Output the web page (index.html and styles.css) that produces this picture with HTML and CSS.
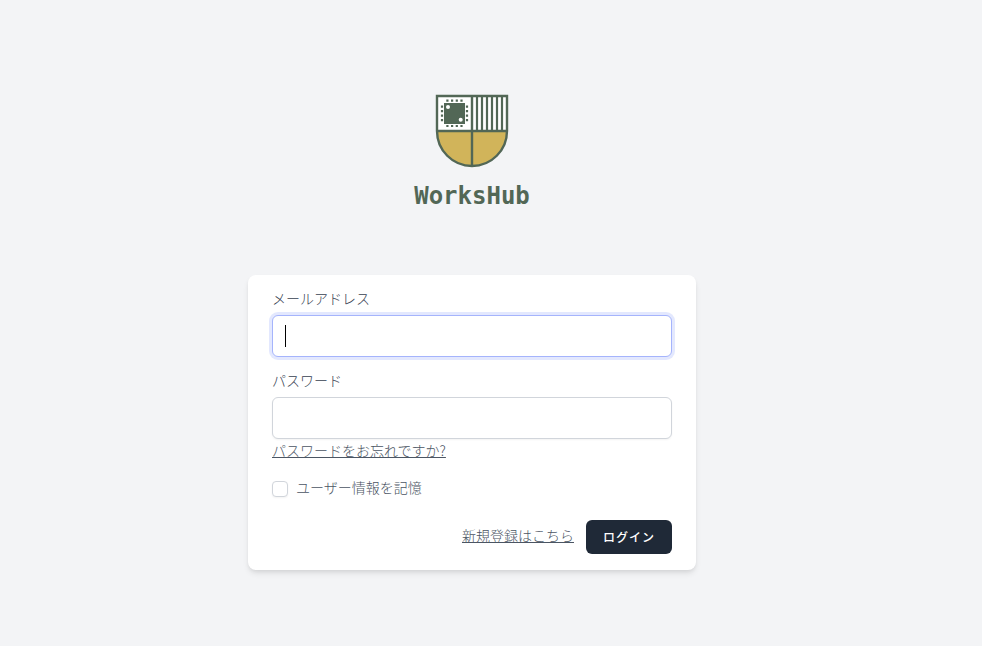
FILE: index.html
```html
<!DOCTYPE html>
<html lang="ja">
<head>
  <meta charset="UTF-8">
  <meta name="viewport" content="width=device-width, initial-scale=1.0">
  <title>WorksHub</title>
  <link rel="stylesheet" href="styles.css">
</head>
<body>
  <main class="page">
    <a class="logo" href="#">
      <svg class="logo-mark" viewBox="0 0 74 74" aria-hidden="true">
        <path d="M2 2H72V37A35 35 0 0 1 2 37Z" fill="#fff"/>
        <path d="M2 37H72A35 35 0 0 1 2 37Z" fill="#d1b45a"/>
        <!-- stripes -->
        <path d="M42 2V37M47 2V37M52 2V37M57 2V37M62 2V37M67 2V37" stroke="#526756" stroke-width="2.2"/>
        <!-- chip -->
        <rect x="9" y="9" width="21" height="21" fill="#526756"/>
        <path d="M11.3 6.7H28M11.3 32H28" stroke="#526756" stroke-width="2.2" stroke-dasharray="2.2 2.5"/>
        <path d="M7 11.6V28M32 11.6V28" stroke="#526756" stroke-width="2.2" stroke-dasharray="2.2 2.3"/>
        <circle cx="13" cy="13" r="2" fill="#fff"/>
        <circle cx="25.7" cy="25.7" r="2" fill="#fff"/>
        <path d="M2 37H72M37 2V72M2 2H72V37A35 35 0 0 1 2 37Z" fill="none" stroke="#526756" stroke-width="2.4"/>
      </svg>
      <span class="logo-text">WorksHub</span>
    </a>

    <form class="card">
      <div class="field">
        <label for="email">メールアドレス</label>
        <input type="email" id="email" class="text-input active" autocomplete="off">
      </div>

      <div class="field">
        <label for="password">パスワード</label>
        <input type="password" id="password" class="text-input">
      </div>
      <a class="link forgot" href="#">パスワードをお忘れですか?</a>

      <div class="remember">
        <input type="checkbox" id="remember">
        <label for="remember">ユーザー情報を記憶</label>
      </div>

      <div class="actions">
        <a class="link" href="#">新規登録はこちら</a>
        <button type="submit">ログイン</button>
      </div>
    </form>
  </main>
</body>
</html>
```

FILE: styles.css
```css
:root {
  --green: #526756;
  --gray-100: #f3f4f6;
  --gray-300: #d1d5db;
  --gray-600: #4b5563;
  --gray-700: #374151;
  --gray-800: #1f2937;
}

* {
  box-sizing: border-box;
}

body {
  margin: 0;
  background-color: var(--gray-100);
  font-family: "Noto Sans CJK JP", sans-serif;
  font-size: 14px;
  font-weight: 300;
  line-height: 14px;
  color: var(--gray-700);
}

.page {
  display: flex;
  flex-direction: column;
  align-items: center;
  min-height: 100vh;
  padding: 94px 38px 76px 0;
}

.logo {
  display: flex;
  flex-direction: column;
  align-items: center;
  gap: 12px;
  color: var(--green);
  text-decoration: none;
}

.logo-mark {
  display: block;
  width: 74px;
  height: 74px;
}

.logo-text {
  font-family: "DejaVu Sans Mono", monospace;
  font-size: 24px;
  font-weight: bold;
  line-height: 32px;
}

.card {
  width: 100%;
  max-width: 448px;
  margin-top: 63px;
  padding: 16px 24px;
  background-color: #fff;
  border-radius: 8px;
  box-shadow: 0 4px 6px -1px rgba(0, 0, 0, 0.1), 0 2px 4px -1px rgba(0, 0, 0, 0.06);
}

.field + .field {
  margin-top: 16px;
}

.field label {
  display: block;
  margin-bottom: 10px;
}

.text-input {
  display: block;
  width: 100%;
  height: 42px;
  padding: 8px 12px;
  font: inherit;
  font-size: 16px;
  background-color: #fff;
  border: 1px solid var(--gray-300);
  border-radius: 6px;
  box-shadow: 0 1px 2px rgba(0, 0, 0, 0.05);
  outline: none;
}

.text-input.active,
.text-input:focus {
  border-color: #a5b4fc;
  box-shadow: 0 0 0 3px rgba(199, 210, 254, 0.5);
}

/* text cursor */
.text-input.active {
  caret-color: transparent;
  background-image: linear-gradient(#000, #000);
  background-repeat: no-repeat;
  background-position: 12px center;
  background-size: 1px 22px;
}

.link {
  color: var(--gray-600);
  text-decoration: underline;
}

.forgot {
  display: block;
  width: fit-content;
  margin-top: 4px;
}

.remember {
  display: flex;
  align-items: center;
  gap: 8px;
  margin-top: 23px;
  color: var(--gray-600);
}

.remember label,
.actions .link {
  padding-bottom: 4px;
}

.remember input {
  appearance: none;
  width: 16px;
  height: 16px;
  margin: 0;
  background-color: #fff;
  border: 1px solid var(--gray-300);
  border-radius: 4px;
  box-shadow: 0 1px 2px rgba(0, 0, 0, 0.05);
}

.remember input:checked {
  background-color: #4f46e5;
}

.actions {
  display: flex;
  align-items: center;
  justify-content: flex-end;
  gap: 12px;
  margin-top: 22px;
}

button {
  padding: 9px 17px;
  font: inherit;
  font-size: 12px;
  font-weight: 500;
  line-height: 16px;
  letter-spacing: 1px;
  color: #fff;
  background-color: var(--gray-800);
  border: none;
  border-radius: 6px;
  cursor: pointer;
}

button:hover {
  background-color: var(--gray-700);
}
```
